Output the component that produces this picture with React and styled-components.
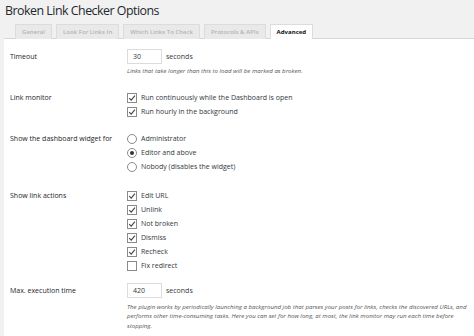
import React from 'react';
import styled, { createGlobalStyle } from 'styled-components';

const GlobalStyle = createGlobalStyle`
  html, body {
    margin: 0;
    padding: 0;
    background: #f1f1f1;
    font-family: "Open Sans", "Noto Sans", sans-serif;
    color: #23282d;
  }
`;

const tabs = [
  'General',
  'Look For Links In',
  'Which Links To Check',
  'Protocols & APIs',
  'Advanced',
];

const linkActions = [
  { label: 'Edit URL', checked: true },
  { label: 'Unlink', checked: true },
  { label: 'Not broken', checked: true },
  { label: 'Dismiss', checked: true },
  { label: 'Recheck', checked: true },
  { label: 'Fix redirect', checked: false },
];

const CheckBox = ({ checked }) => (
  <Box>
    {checked && (
      <svg width="8" height="8" viewBox="0 0 8 8">
        <polyline
          points="1.2,4.2 3.2,6.1 6.9,1.6"
          fill="none"
          stroke="#444"
          strokeWidth="1.1"
        />
      </svg>
    )}
  </Box>
);

const Radio = ({ checked }) => (
  <Circle>{checked && <Dot />}</Circle>
);

const App = () => {
  return (
    <>
      <GlobalStyle />
      <Page>
        <Title>Broken Link Checker Options</Title>
        <TabBar>
          {tabs.map((tab) => (
            <Tab key={tab} $active={tab === 'Advanced'}>
              {tab}
            </Tab>
          ))}
        </TabBar>
        <Panel>
          <Row $top={10}>
            <Label $lh={15}>Timeout</Label>
            <Field>
              <InputLine>
                <NumberInput>30</NumberInput>
                <Unit>seconds</Unit>
              </InputLine>
              <Description>
                Links that take longer than this to load will be marked as
                broken.
              </Description>
            </Field>
          </Row>

          <Row $top={15}>
            <Label>Link monitor</Label>
            <Field>
              <Option>
                <CheckBox checked />
                Run continuously while the Dashboard is open
              </Option>
              <Option>
                <CheckBox checked />
                Run hourly in the background
              </Option>
            </Field>
          </Row>

          <Row $top={13}>
            <Label>Show the dashboard widget for</Label>
            <Field>
              <Option>
                <Radio />
                Administrator
              </Option>
              <Option>
                <Radio checked />
                Editor and above
              </Option>
              <Option>
                <Radio />
                Nobody (disables the widget)
              </Option>
            </Field>
          </Row>

          <Row $top={15}>
            <Label>Show link actions</Label>
            <Field>
              {linkActions.map((action) => (
                <Option key={action.label}>
                  <CheckBox checked={action.checked} />
                  {action.label}
                </Option>
              ))}
            </Field>
          </Row>

          <Row $top={10}>
            <Label $lh={15}>Max. execution time</Label>
            <Field>
              <InputLine>
                <NumberInput>420</NumberInput>
                <Unit>seconds</Unit>
              </InputLine>
              <Description $mt={4}>
                The plugin works by periodically launching a background job
                that parses your posts for links, checks the discovered URLs,
                and performs other time-consuming tasks. Here you can set for
                how long, at most, the link monitor may run each time before
                stopping.
              </Description>
            </Field>
          </Row>
        </Panel>
      </Page>
    </>
  );
};

const Page = styled.div`
  padding-left: 4px;
  width: 470px;
  height: 336px;
  overflow: hidden;
`;

const Title = styled.h1`
  margin: 0;
  padding: 2px 0 0 1px;
  height: 22px;
  font-size: 12.4px;
  font-weight: 400;
  letter-spacing: -0.5px;
  line-height: 18px;
  color: #23282d;
`;

const TabBar = styled.div`
  display: flex;
  gap: 4px;
  padding-left: 11px;
  height: 14px;
  border-bottom: 1px solid #d6d6d6;
`;

const Tab = styled.div`
  display: flex;
  align-items: center;
  padding: 0 6px;
  margin-bottom: -1px;
  border: 1px solid #dcdcdc;
  border-bottom: none;
  background: ${(p) => (p.$active ? '#ffffff' : '#e9e9e9')};
  color: ${(p) => (p.$active ? '#111' : '#b4b4b4')};
  font-size: 6.05px;
  font-weight: ${(p) => (p.$active ? 700 : 600)};
  white-space: nowrap;
`;

const Panel = styled.div`
  background: #ffffff;
  height: 300px;
  padding-left: 6px;
`;

const Row = styled.div`
  display: grid;
  grid-template-columns: 117px 1fr;
  padding-top: ${(p) => p.$top}px;
`;

const Label = styled.div`
  font-size: 7px;
  font-weight: 400;
  line-height: ${(p) => p.$lh || 14}px;
  color: #1d2327;
  white-space: nowrap;
`;

const Field = styled.div`
  display: flex;
  flex-direction: column;
`;

const InputLine = styled.div`
  display: flex;
  align-items: center;
  gap: 4px;
`;

const NumberInput = styled.div`
  box-sizing: border-box;
  width: 35px;
  height: 15px;
  border: 1px solid #dcdcdc;
  padding-left: 5px;
  font-size: 7px;
  line-height: 13px;
  color: #32373c;
`;

const Unit = styled.span`
  font-size: 7px;
  color: #32373c;
`;

const Description = styled.p`
  margin: ${(p) => p.$mt || 2}px 0 0;
  width: 346px;
  font-size: 6.15px;
  font-style: italic;
  line-height: 9.5px;
  color: #555;
`;

const Option = styled.label`
  display: flex;
  align-items: center;
  gap: 4px;
  height: 14px;
  font-size: 7px;
  color: #32373c;
  white-space: nowrap;
`;

const Box = styled.span`
  box-sizing: border-box;
  display: flex;
  align-items: center;
  justify-content: center;
  width: 10px;
  height: 10px;
  border: 1px solid #8a8a8a;
  background: #fff;
`;

const Circle = styled.span`
  box-sizing: border-box;
  display: flex;
  align-items: center;
  justify-content: center;
  width: 10px;
  height: 10px;
  border: 1px solid #8a8a8a;
  border-radius: 50%;
  background: #fff;
`;

const Dot = styled.span`
  width: 4px;
  height: 4px;
  border-radius: 50%;
  background: #333;
`;

export default App;
